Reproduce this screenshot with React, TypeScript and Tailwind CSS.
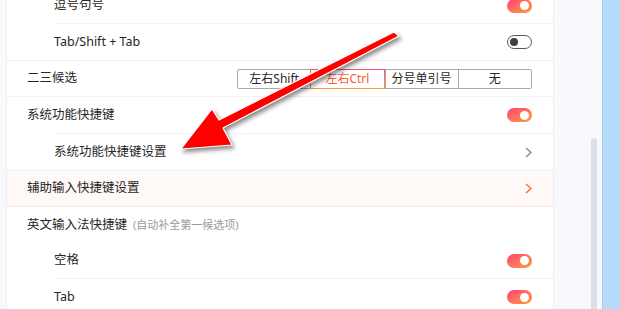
function Toggle({ on }: { on: boolean }) {
  if (on) {
    return (
      <div className="w-[25px] h-[14px] rounded-full bg-linear-to-br from-[#ff3b73] to-[#ff9a30] flex items-center justify-end pr-[3px]">
        <div className="w-[9px] h-[9px] rounded-full bg-white" />
      </div>
    );
  }
  return (
    <div className="w-[25px] h-[14px] rounded-full border-[1.5px] border-[#5a5a5a] bg-white flex items-center pl-[2px]">
      <div className="w-[8px] h-[8px] rounded-full bg-[#3f3f46]" />
    </div>
  );
}

function Chevron({ color }: { color: string }) {
  return (
    <svg width="7" height="11" viewBox="0 0 7 11" fill="none">
      <polyline points="1,1 6,5.5 1,10" stroke={color} strokeWidth="1.4" />
    </svg>
  );
}

function SubRow({ label, right, last }: { label: string; right: React.ReactNode; last?: boolean }) {
  return (
    <div className="h-[36px] pl-[47px]">
      <div className={`h-full flex items-center justify-between pr-[21px] ${last ? '' : 'border-b border-[#f0f1f4]'}`}>
        <span>{label}</span>
        {right}
      </div>
    </div>
  );
}

function Segmented() {
  return (
    <div className="flex w-[295px] h-[20px] border border-[#a9a9a9] rounded-[2px] text-[12px]">
      <div className="flex-1 flex items-center justify-center">左右Shift</div>
      <div className="flex-1 -my-px bg-linear-to-b from-[#ff4a70] to-[#ff9a3a] p-px">
        <div className="h-full bg-white flex items-center justify-center text-[#ff5a3a]">左右Ctrl</div>
      </div>
      <div className="flex-1 flex items-center justify-center border-l border-[#a9a9a9]">分号单引号</div>
      <div className="flex-1 flex items-center justify-center border-l border-[#a9a9a9]">无</div>
    </div>
  );
}

export default function App() {
  return (
    <div
      className="relative w-[620px] h-[309px] overflow-hidden flex bg-[#f8f9fc] text-[12.5px] text-[#262626]"
      style={{ fontFamily: '"Noto Sans", "Noto Sans CJK SC", sans-serif' }}
    >
      <div className="w-[7px] shrink-0 border-r border-[#eceef3]" />

      <div className="w-[547px] shrink-0 bg-white border-r border-[#eceef3]">
        <div className="-mt-[12px]">
          <SubRow label="逗号句号" right={<Toggle on />} />
          <div className="border-b border-[#f0f1f4]">
            <SubRow label="Tab/Shift + Tab" right={<Toggle on={false} />} last />
          </div>
          <div className="h-[36px] flex items-center justify-between pl-[20px] pr-[21px] border-b border-[#f0f1f4]">
            <span>二三候选</span>
            <Segmented />
          </div>
          <div className="h-[36px] flex items-center justify-between pl-[20px] pr-[21px]">
            <span>系统功能快捷键</span>
            <Toggle on />
          </div>
          <div className="border-t border-[#f0f1f4] ml-[47px]" />
          <div className="border-b border-[#f0f1f4]">
            <SubRow label="系统功能快捷键设置" right={<Chevron color="#888" />} last />
          </div>
          <div className="h-[36px] flex items-center justify-between pl-[20px] pr-[21px] bg-[#fff9f7] border-b border-[#f3eeec]">
            <span>辅助输入快捷键设置</span>
            <Chevron color="#ff6a3c" />
          </div>
          <div className="h-[36px] flex items-center pl-[20px] pr-[21px]">
            <span>英文输入法快捷键</span>
            <span className="ml-[6px] text-[11px] text-[#9a9a9a]">(自动补全第一候选项)</span>
          </div>
          <SubRow label="空格" right={<Toggle on />} />
          <SubRow label="Tab" right={<Toggle on />} last />
        </div>
      </div>

      <div className="w-[48px] shrink-0 flex justify-end pr-[5px] pt-[138px]">
        <div className="w-[6px] h-[200px] rounded-t-full bg-[#dcdee8]" />
      </div>

      <div className="flex-1 bg-[#b6dbfa] border-l border-[#a3cdf0]" />

      <svg
        className="absolute left-0 top-0 pointer-events-none"
        width="620"
        height="309"
        style={{ filter: 'drop-shadow(2px 3px 2px rgba(0,0,0,0.45))' }}
      >
        <polygon
          points="394,32 399,36 223,128 232,145 181,149 212,109 219,120"
          fill="#ff0000"
          stroke="#ffffff"
          strokeWidth="1.2"
          strokeLinejoin="round"
        />
      </svg>
    </div>
  );
}
